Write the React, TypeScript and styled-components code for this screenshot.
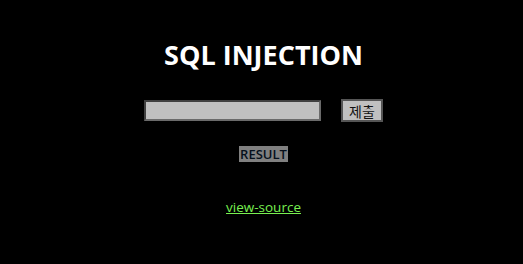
import React from 'react';
import styled, { createGlobalStyle } from 'styled-components';

const GlobalStyle = createGlobalStyle`
  html, body {
    margin: 0;
    padding: 0;
    background: #000;
  }
  body {
    font-family: 'Open Sans', 'Noto Sans CJK KR', sans-serif;
    color: #fff;
  }
`;

const Page = styled.div`
  width: 523px;
  height: 264px;
  display: flex;
  flex-direction: column;
  align-items: center;
  padding-top: 35px;
  padding-left: 4px;
  box-sizing: border-box;
`;

const Title = styled.h1`
  margin: 0;
  font-size: 27px;
  font-weight: 700;
  line-height: 40px;
  color: #fff;
`;

const Form = styled.form`
  display: flex;
  align-items: center;
  gap: 20px;
  margin-top: 24px;
`;

const Input = styled.input`
  width: 177px;
  height: 21px;
  box-sizing: border-box;
  background: #c0c0c0;
  border: 2px solid;
  border-color: #404040 #6a6a6a #6a6a6a #404040;
  padding: 0 4px;
  outline: none;
`;

const Submit = styled.button`
  width: 42px;
  height: 23px;
  box-sizing: border-box;
  background: #c0c0c0;
  border: 2px solid #555;
  font-family: 'Noto Sans CJK KR', sans-serif;
  font-size: 14px;
  color: #111;
  padding: 0;
  line-height: 1;
`;

const Result = styled.div`
  margin-top: 24px;
  background: #808080;
  color: #06101c;
  font-size: 13px;
  font-weight: 600;
  line-height: 16px;
  padding: 0 1px;
`;

const SourceLink = styled.a`
  margin-top: 36px;
  font-size: 13.5px;
  color: #78f050;
  text-decoration: underline;
`;

export default function App() {
  return (
    <>
      <GlobalStyle />
      <Page>
        <Title>SQL INJECTION</Title>
        <Form onSubmit={e => e.preventDefault()}>
          <Input type="text" name="query" />
          <Submit type="submit">제출</Submit>
        </Form>
        <Result>RESULT</Result>
        <SourceLink href="#">view-source</SourceLink>
      </Page>
    </>
  );
}
